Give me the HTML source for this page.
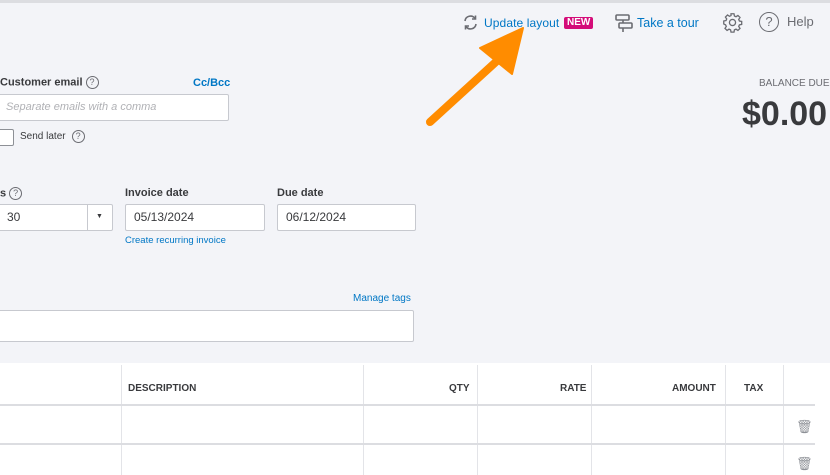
<!DOCTYPE html>
<html><head><style>
*{margin:0;padding:0;box-sizing:border-box}
body{width:830px;height:475px;overflow:hidden;background:#f3f4f8;font-family:"Liberation Sans",sans-serif;position:relative;color:#393a3d}
.a{position:absolute;white-space:nowrap}
.lbl{font-size:11px;font-weight:bold;color:#393a3d}
.inp{position:absolute;background:#fff;border:1px solid #c7c9cf;border-radius:2px;font-size:12px;color:#393a3d;padding-left:8px;line-height:24px;white-space:nowrap}
.link{color:#0077c5}
.th{position:absolute;top:383px;font-size:10px;font-weight:bold;color:#393a3d}
.vl{position:absolute;top:365px;width:1px;height:110px;background:#e3e4e8}
.q{display:inline-block;width:13px;height:13px;border:1.2px solid #6b6c72;border-radius:50%;font-size:9px;text-align:center;line-height:11px;color:#6b6c72;font-weight:normal;vertical-align:middle;margin-left:3px}
</style></head><body>
<div class="a" style="left:0;top:0;width:830px;height:3px;background:#dcdde1"></div>
<svg class="a" style="left:462px;top:14px" width="17" height="17" viewBox="0 0 17 17" fill="none" stroke="#6b6c72" stroke-width="1.6"><path d="M3 7a5.5 5.5 0 0 1 10-2.5M14 10a5.5 5.5 0 0 1-10 2.5"/><path d="M13.5 1.5v3.5h-3.5M3.5 15.5v-3.5h3.5"/></svg>
<div class="a link" style="left:484px;top:16px;font-size:12px;letter-spacing:0.1px">Update layout</div>
<div class="a" style="left:564px;top:17px;background:#d40c79;color:#fff;font-size:10px;font-weight:bold;padding:0 3px;line-height:12px;border-radius:2px">NEW</div>
<svg class="a" style="left:614px;top:13px" width="20" height="20" viewBox="0 0 20 20" fill="none" stroke="#6b6c72" stroke-width="1.6"><rect x="2" y="2" width="13" height="5" rx="1"/><rect x="5" y="10" width="13" height="5" rx="1"/><path d="M9 7v3M9 15v4"/></svg>
<div class="a link" style="left:637px;top:16px;font-size:12.5px">Take a tour</div>
<svg class="a" style="left:722px;top:12px" width="21" height="21" viewBox="0 0 24 24" fill="none" stroke="#6b6c72" stroke-width="1.5"><circle cx="12" cy="12" r="3.5"/><path d="M10.3 2h3.4l.5 2.6 1.8.8 2.2-1.5 2.4 2.4-1.5 2.2.8 1.8 2.6.5v3.4l-2.6.5-.8 1.8 1.5 2.2-2.4 2.4-2.2-1.5-1.8.8-.5 2.6h-3.4l-.5-2.6-1.8-.8-2.2 1.5-2.4-2.4 1.5-2.2-.8-1.8L2 13.7v-3.4l2.6-.5.8-1.8-1.5-2.2 2.4-2.4 2.2 1.5 1.8-.8z"/></svg>
<div class="a" style="left:759px;top:12px;width:20px;height:20px;border:1.6px solid #6b6c72;border-radius:50%;text-align:center;font-size:13px;line-height:17px;color:#6b6c72">?</div>
<div class="a" style="left:787px;top:14px;font-size:13px;color:#6b6c72">Help</div>
<svg class="a" style="left:420px;top:20px" width="120" height="110" viewBox="0 0 120 110"><path d="M10 102 L78 40" stroke="#ff8c00" stroke-width="8" stroke-linecap="round"/><path d="M103 8 L60 28 L92 54 Z" fill="#ff8c00" stroke="#ff8c00" stroke-width="2" stroke-linejoin="round"/></svg>
<div class="a" style="left:759px;top:78px;font-size:10px;color:#6b6c72">BALANCE DUE</div>
<div class="a" style="left:742px;top:95px;font-size:34px;font-weight:bold;color:#393a3d">$0.00</div>
<div class="a lbl" style="left:0;top:76px">Customer email<span class="q">?</span></div>
<div class="a link lbl" style="left:193px;top:77px;color:#0077c5">Cc/Bcc</div>
<div class="inp" style="left:-2px;top:94px;width:231px;height:27px;font-style:italic;color:#b0b1b5;font-size:11px;line-height:25px;padding-left:7px">Separate emails with a comma</div>
<div class="a" style="left:-4px;top:129px;width:18px;height:17px;border:1px solid #8d9096;border-radius:2px;background:#fff"></div>
<div class="a" style="left:20px;top:130px;font-size:10px;color:#393a3d">Send later<span class="q" style="margin-left:6px">?</span></div>
<div class="a lbl" style="left:0;top:187px">s<span class="q">?</span></div>
<div class="inp" style="left:-2px;top:204px;width:115px;height:27px;line-height:25px">30</div>
<div class="a" style="left:87px;top:205px;width:1px;height:25px;background:#c7c9cf"></div>
<div class="a" style="left:96px;top:213px;font-size:7px">▼</div>
<div class="a lbl" style="left:125px;top:187px">Invoice date</div>
<div class="inp" style="left:125px;top:204px;width:140px;height:27px;line-height:25px">05/13/2024</div>
<div class="a link" style="left:125px;top:235px;font-size:9.5px">Create recurring invoice</div>
<div class="a lbl" style="left:277px;top:187px">Due date</div>
<div class="inp" style="left:277px;top:204px;width:139px;height:27px;line-height:25px">06/12/2024</div>
<div class="a link" style="left:353px;top:293px;font-size:10px">Manage tags</div>
<div class="inp" style="left:-2px;top:310px;width:416px;height:32px"></div>
<div class="a" style="left:0;top:363px;width:830px;height:112px;background:#fff"></div>
<div class="vl" style="left:121px"></div><div class="vl" style="left:363px"></div><div class="vl" style="left:477px"></div><div class="vl" style="left:591px"></div><div class="vl" style="left:725px"></div><div class="vl" style="left:783px"></div>
<div class="th" style="left:128px">DESCRIPTION</div>
<div class="th" style="left:449px">QTY</div>
<div class="th" style="left:560px">RATE</div>
<div class="th" style="left:672px">AMOUNT</div>
<div class="th" style="left:744px">TAX</div>
<div class="a" style="left:0;top:404px;width:815px;height:2px;background:#dcdde1"></div>
<div class="a" style="left:0;top:443px;width:815px;height:2px;background:#dcdde1"></div>
<div class="a" style="left:796px;top:419px;color:#8d9096;font-size:13px">🗑</div>
<div class="a" style="left:796px;top:456px;color:#8d9096;font-size:13px">🗑</div>
</body></html>
